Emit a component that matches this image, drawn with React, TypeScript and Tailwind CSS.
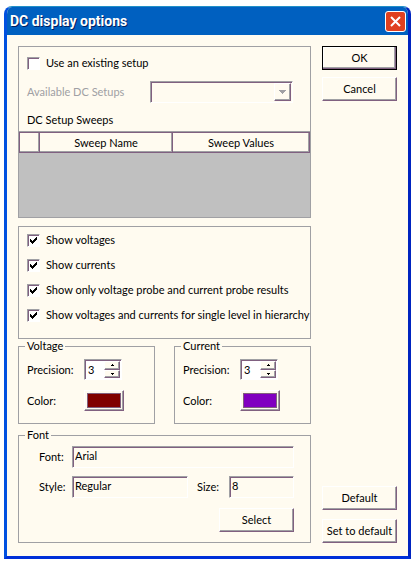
import { useState } from 'react'
import type { ReactNode } from 'react'

const CHECKS = [
  { id: 'voltages', label: 'Show voltages' },
  { id: 'currents', label: 'Show currents' },
  { id: 'probes', label: 'Show only voltage probe and current probe results' },
  { id: 'single', label: 'Show voltages and currents for single level in hierarchy' },
]

const RAISED = 'border border-t-white border-l-white border-r-[#806080] border-b-[#806080] shadow-[inset_-1px_-1px_0_#a0a0a4]'
const SUNKEN = 'border border-t-[#a0a0a4] border-l-[#a0a0a4] border-r-white border-b-white shadow-[inset_1px_1px_0_#806080]'
const DEFAULT_RAISED = 'border border-black shadow-[inset_-1px_-1px_0_#806080,inset_-2px_-2px_0_#a0a0a4,inset_1px_1px_0_white]'

function CheckRow({ id, label, checked, onChange }: {
  id: string
  label: string
  checked: boolean
  onChange: (value: boolean) => void
}) {
  return (
    <div className="flex items-center">
      <span className="relative h-[13px] w-[13px] shrink-0">
        <input
          id={id}
          type="checkbox"
          checked={checked}
          onChange={(e) => onChange(e.target.checked)}
          className={`block h-full w-full appearance-none bg-white ${SUNKEN}`}
        />
        {checked && (
          <svg className="pointer-events-none absolute top-[3px] left-[3px] h-[7px] w-[7px]" viewBox="0 0 7 7" shapeRendering="crispEdges">
            <path d="M0 2h1v1h1v1h1v-1h1v-1h1v-1h1v-1h1v3h-1v1h-1v1h-1v1h-1v1h-1v-1h-1v-1h-1z" />
          </svg>
        )}
      </span>
      <label htmlFor={id} className="pl-1.5 whitespace-nowrap">{label}</label>
    </div>
  )
}

function PushButton({ children, isDefault }: { children: ReactNode; isDefault?: boolean }) {
  return (
    <button type="button" className={`h-6 w-full whitespace-nowrap ${isDefault ? DEFAULT_RAISED : RAISED}`}>
      {children}
    </button>
  )
}

function ProbeGroup({ name, initialColor }: { name: string; initialColor: string }) {
  const [precision, setPrecision] = useState(3)
  const id = `${name.toLowerCase()}-precision`

  return (
    <fieldset className="min-w-0 flex-1 border border-[#a0a0a4] pb-3 pl-2">
      <legend className="-ml-0.5 px-0.5 leading-[14px]">{name}</legend>
      <div className="flex items-center pt-1.5">
        <label htmlFor={id} className="w-[57px]">Precision:</label>
        <div className={`flex h-[21px] w-[38px] bg-white p-px ${SUNKEN}`}>
          <input
            id={id}
            type="number"
            value={precision}
            onChange={(e) => setPrecision(Number(e.target.value))}
            className="w-[18px] appearance-none pl-0.5 outline-none [&::-webkit-inner-spin-button]:appearance-none"
          />
          <div className="flex flex-1 flex-col">
            <button
              type="button"
              aria-label={`Increase ${name} precision`}
              onClick={() => setPrecision(precision + 1)}
              className={`flex flex-1 items-center justify-center bg-[#fffbf0] ${RAISED}`}
            >
              <svg className="h-[2px] w-[3px]" viewBox="0 0 3 2" shapeRendering="crispEdges"><path d="M1 0h1v1h1v1h-3v-1h1z" /></svg>
            </button>
            <button
              type="button"
              aria-label={`Decrease ${name} precision`}
              onClick={() => setPrecision(precision - 1)}
              className={`flex flex-1 items-center justify-center bg-[#fffbf0] ${RAISED}`}
            >
              <svg className="h-[2px] w-[3px]" viewBox="0 0 3 2" shapeRendering="crispEdges"><path d="M0 0h3v1h-1v1h-1v-1h-1z" /></svg>
            </button>
          </div>
        </div>
      </div>
      <div className="flex items-center pt-2.5">
        <span className="w-[57px]">Color:</span>
        <button type="button" aria-label={`${name} color`} className={`h-[21px] w-10 p-0.5 ${RAISED}`}>
          <span className="block h-full border border-[#806080]" style={{ backgroundColor: initialColor }} />
        </button>
      </div>
    </fieldset>
  )
}

export default function App() {
  const [useExisting, setUseExisting] = useState(false)
  const [checks, setChecks] = useState<Record<string, boolean>>({
    voltages: true, currents: true, probes: true, single: true,
  })

  return (
    <div className="bg-white pt-1.5 pr-0.5 pb-1.5 pl-1 font-[Lato,Arial,sans-serif] text-[11px] leading-[14px] text-black">
      <main className="overflow-hidden rounded-t-lg border-x-[3px] border-t border-b-[3px] border-t-[#2090c8] border-r-[#0024c0] border-b-[#0030d8] border-l-[#0050e0] bg-[#fffbf0]">
        {/* Title bar */}
        <header className="flex h-7 items-center justify-between bg-[#0060c0] pr-0.5 pl-[3px]">
          <h1 className="font-[Roboto,sans-serif] text-sm font-bold text-white [text-shadow:1px_1px_0_#002060]">DC display options</h1>
          <button
            type="button"
            aria-label="Close"
            className="flex h-[21px] w-[21px] items-center justify-center rounded-[3px] border border-white bg-[#e04020]"
          >
            <svg className="h-[11px] w-[11px]" viewBox="0 0 11 11" stroke="white" strokeWidth="2"><path d="M1 1l9 9M10 1l-9 9" /></svg>
          </button>
        </header>

        <form className="flex gap-[11px] px-[11px] pt-[11px] pb-[13px]">
          <div className="flex min-w-0 flex-1 flex-col">
            {/* Existing setup */}
            <section className="border border-[#a0a0a4]">
              <div className="px-2 pt-[9px]">
                <CheckRow id="existing" label="Use an existing setup" checked={useExisting} onChange={setUseExisting} />
              </div>
              <div className="flex items-center justify-between pt-[11px] pr-[17px] pl-2 text-[#a0a0a4]">
                <label htmlFor="setups">Available DC Setups</label>
                <div className="relative h-[22px] w-[143px]">
                  <select id="setups" disabled={!useExisting} className={`h-full w-full appearance-none ${SUNKEN}`} />
                  <span className={`pointer-events-none absolute top-0.5 right-0.5 bottom-0.5 flex w-[17px] items-center justify-center bg-[#fffbf0] ${RAISED}`}>
                    <svg className="h-[4px] w-[7px]" viewBox="0 0 7 4" fill="#a0a0a4" shapeRendering="crispEdges"><path d="M0 0h7v1h-1v1h-1v1h-1v1h-1v-1h-1v-1h-1v-1h-1z" /></svg>
                  </span>
                </div>
              </div>
              <h2 id="sweeps" className="px-2 pt-2.5 pb-1">DC Setup Sweeps</h2>
              <div className="h-[86px] border-t border-t-[#a0a0a4] bg-[#c0c0c0]">
                <table aria-labelledby="sweeps" className="w-full table-fixed border-collapse bg-[#fffbf0]">
                  <thead>
                    <tr className="h-5 border border-[#806080]">
                      <th className="w-5 border border-[#806080] shadow-[inset_-1px_-1px_0_#a0a0a4]" />
                      <th className="w-[133px] border border-[#806080] font-normal shadow-[inset_-1px_-1px_0_#a0a0a4]">Sweep Name</th>
                      <th className="border border-[#806080] font-normal shadow-[inset_-1px_-1px_0_#a0a0a4]">Sweep Values</th>
                    </tr>
                  </thead>
                </table>
              </div>
            </section>

            {/* Result visibility */}
            <section className="mt-2 flex flex-col gap-[11px] border border-[#a0a0a4] px-2 pt-1.5 pb-4">
              {CHECKS.map((c) => (
                <CheckRow
                  key={c.id}
                  id={c.id}
                  label={c.label}
                  checked={checks[c.id]}
                  onChange={(value) => setChecks((prev) => ({ ...prev, [c.id]: value }))}
                />
              ))}
            </section>

            <div className="flex gap-[19px]">
              <ProbeGroup name="Voltage" initialColor="#800000" />
              <ProbeGroup name="Current" initialColor="#8000c0" />
            </div>

            {/* Font */}
            <fieldset className="mt-1 min-w-0 border border-[#a0a0a4] pr-4 pb-2.5 pl-5">
              <legend className="-ml-3.5 px-0.5 leading-[14px]">Font</legend>
              <div className="flex items-center pt-1">
                <label htmlFor="font" className="w-[33px]">Font:</label>
                <input id="font" readOnly value="Arial" className={`h-[22px] min-w-0 flex-1 px-0.5 pb-1 ${SUNKEN}`} />
              </div>
              <div className="flex items-center pt-2">
                <label htmlFor="style" className="w-[33px]">Style:</label>
                <input id="style" readOnly value="Regular" className={`h-[22px] min-w-0 flex-1 px-0.5 pb-1 ${SUNKEN}`} />
                <label htmlFor="size" className="w-[41px] pl-[9px]">Size:</label>
                <input id="size" readOnly value="8" className={`h-[22px] w-[65px] px-0.5 pb-1 ${SUNKEN}`} />
              </div>
              <div className="ml-auto w-[75px] pt-2.5">
                <PushButton>Select</PushButton>
              </div>
            </fieldset>
          </div>

          <div className="flex w-[75px] shrink-0 flex-col justify-between">
            <div className="flex flex-col gap-[7px]">
              <PushButton isDefault>OK</PushButton>
              <PushButton>Cancel</PushButton>
            </div>
            <div className="flex flex-col gap-[9px]">
              <PushButton>Default</PushButton>
              <PushButton>Set to default</PushButton>
            </div>
          </div>
        </form>
      </main>
    </div>
  )
}
